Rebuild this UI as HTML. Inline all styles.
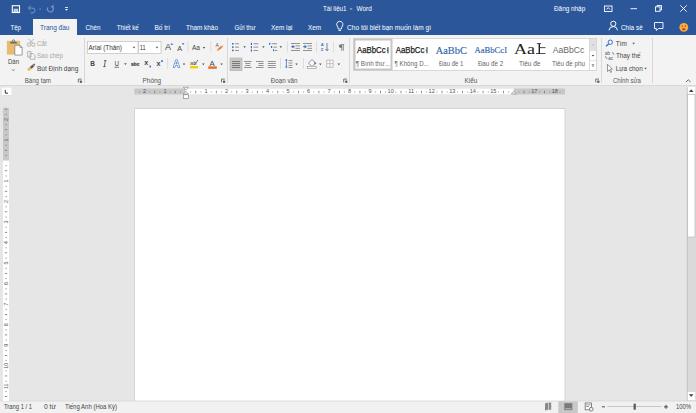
<!DOCTYPE html>
<html><head><meta charset="utf-8">
<style>
*{margin:0;padding:0}
html,body{width:696px;height:413px;overflow:hidden;background:#e6e6e6}
svg{position:absolute;left:0;top:0;font-family:"Liberation Sans",sans-serif}
</style></head><body>
<svg width="696" height="413" viewBox="0 0 696 413">
<rect x="0" y="0" width="696" height="413" fill="#e6e6e6"/>
<rect x="0" y="0" width="696" height="35" fill="#2b579a"/>
<rect x="0" y="35" width="696" height="50" fill="#f3f3f3"/>
<rect x="0" y="85" width="696" height="1" fill="#d8d8d8"/>
<rect x="33" y="19" width="44" height="16.5" fill="#f3f3f3"/>
<rect x="134.5" y="108.5" width="430.5" height="300" fill="#fff" stroke="#d4d4d4" stroke-width="1"/>
<rect x="0" y="401" width="696" height="12" fill="#f1f1f1"/>
<rect x="0" y="400.6" width="696" height="0.8" fill="#d6d6d6"/>
<text x="323" y="10.88" font-size="6.9" fill="#ffffff" font-weight="normal" textLength="23.5" lengthAdjust="spacingAndGlyphs" text-anchor="start">Tài liệu1</text>
<rect x="349.8" y="8.6" width="2.4" height="0.7" fill="#fff"/>
<text x="356.5" y="10.88" font-size="6.9" fill="#ffffff" font-weight="normal" textLength="15.3" lengthAdjust="spacingAndGlyphs" text-anchor="start">Word</text>
<text x="554" y="10.88" font-size="6.9" fill="#ffffff" font-weight="normal" textLength="31.2" lengthAdjust="spacingAndGlyphs" text-anchor="start">Đăng nhập</text>
<text x="10.5" y="29.88" font-size="6.9" fill="#ffffff" font-weight="normal" textLength="10.5" lengthAdjust="spacingAndGlyphs" text-anchor="start">Tệp</text>
<text x="40" y="29.88" font-size="6.9" fill="#2b579a" font-weight="normal" textLength="29.5" lengthAdjust="spacingAndGlyphs" text-anchor="start">Trang đầu</text>
<text x="85.5" y="29.88" font-size="6.9" fill="#ffffff" font-weight="normal" textLength="15" lengthAdjust="spacingAndGlyphs" text-anchor="start">Chèn</text>
<text x="116.8" y="29.88" font-size="6.9" fill="#ffffff" font-weight="normal" textLength="22" lengthAdjust="spacingAndGlyphs" text-anchor="start">Thiết kế</text>
<text x="154.5" y="29.88" font-size="6.9" fill="#ffffff" font-weight="normal" textLength="15.5" lengthAdjust="spacingAndGlyphs" text-anchor="start">Bố trí</text>
<text x="186" y="29.88" font-size="6.9" fill="#ffffff" font-weight="normal" textLength="32" lengthAdjust="spacingAndGlyphs" text-anchor="start">Tham khảo</text>
<text x="234.5" y="29.88" font-size="6.9" fill="#ffffff" font-weight="normal" textLength="21" lengthAdjust="spacingAndGlyphs" text-anchor="start">Gửi thư</text>
<text x="271" y="29.88" font-size="6.9" fill="#ffffff" font-weight="normal" textLength="21.5" lengthAdjust="spacingAndGlyphs" text-anchor="start">Xem lại</text>
<text x="308" y="29.88" font-size="6.9" fill="#ffffff" font-weight="normal" textLength="13" lengthAdjust="spacingAndGlyphs" text-anchor="start">Xem</text>
<text x="347" y="29.88" font-size="6.9" fill="#ffffff" font-weight="normal" textLength="84" lengthAdjust="spacingAndGlyphs" text-anchor="start">Cho tôi biết bạn muốn làm gì</text>
<text x="621" y="29.88" font-size="6.9" fill="#ffffff" font-weight="normal" textLength="21.7" lengthAdjust="spacingAndGlyphs" text-anchor="start">Chia sẻ</text>
<rect x="12.3" y="5.7" width="7.2" height="6.8" fill="none" stroke="#fff" stroke-width="1.1"/>
<rect x="13.6" y="8.8" width="4.6" height="0.9" fill="#fff"/>
<rect x="13.6" y="10.2" width="4.6" height="1.8" fill="#fff"/>
<path d="M14.5 11.6 Q15.2 10.6 15.9 11.2 Q16.6 11.8 17.3 10.8" fill="none" stroke="#2b579a" stroke-width="0.6"/>
<g fill="none" stroke="#7f97c4" stroke-width="1"><path d="M28.5 8 L32 8 Q35 8 35 10.5 Q35 13 32 13 L30.5 13"/><path d="M30.5 5.8 L28.2 8 L30.5 10.2"/></g>
<rect x="39.5" y="8.5" width="1.2" height="1.2" fill="#7f97c4"/>
<g fill="none" stroke="#7f97c4" stroke-width="1.1"><path d="M52.6 7.2 A2.9 2.9 0 1 1 47.8 7.6"/><path d="M50.8 6.6 L52.8 7.3 L53.4 5"/></g>
<rect x="65" y="7" width="3" height="0.8" fill="#fff"/>
<path d="M65 9 L68 9 L66.5 10.8 Z" fill="#fff"/>
<g fill="none" stroke="#fff" stroke-width="0.9"><rect x="604.5" y="6" width="7.5" height="5.5"/><path d="M606.5 9.5 L608.2 7.6 L610 9.5"/><path d="M630.5 8.7 L637 8.7"/><rect x="655.5" y="6.8" width="4.5" height="4.5"/><path d="M657 6.8 V5.5 H661.5 V10 H660"/><path d="M680.3 5.3 L686.7 11.7 M686.7 5.3 L680.3 11.7"/></g>
<g fill="none" stroke="#fff" stroke-width="1"><circle cx="613.3" cy="23.8" r="2.6"/><path d="M609 30.3 Q609.5 26.5 613.3 26.5 Q617 26.5 617.5 30.3"/></g>
<g fill="none" stroke="#fff" stroke-width="0.9"><path d="M654.5 22.5 H663 V28.5 H658.5 L656.3 30.5 V28.5 H654.5 Z"/></g>
<circle cx="683.8" cy="27.3" r="4.4" fill="#f8b03a"/>
<rect x="681.6" y="25.3" width="1.2" height="1.5" fill="#d0402a"/><rect x="684.8" y="25.3" width="1.2" height="1.5" fill="#d0402a"/>
<ellipse cx="683.8" cy="29.3" rx="1.5" ry="1.2" fill="#d0402a"/>
<g fill="none" stroke="#fff" stroke-width="0.9"><path d="M338.3 29 Q338 27 337.2 26 Q336.5 25 336.8 23.5 Q337.5 21.3 339.8 21.3 Q342.1 21.3 342.8 23.5 Q343.1 25 342.4 26 Q341.6 27 341.3 29 Z"/><path d="M338.5 30.5 H341"/></g>
<rect x="84.0" y="38" width="1" height="45" fill="#d8d8d8"/>
<rect x="227.0" y="38" width="1" height="45" fill="#d8d8d8"/>
<rect x="349.0" y="38" width="1" height="45" fill="#d8d8d8"/>
<rect x="601.0" y="38" width="1" height="45" fill="#d8d8d8"/>
<rect x="652.0" y="38" width="1" height="45" fill="#d8d8d8"/>
<path d="M78.3 82.39999999999999 V79.1 H81.6" fill="none" stroke="#666" stroke-width="0.9"/><rect x="79.8" y="80.6" width="2.2" height="2.2" fill="#555"/>
<path d="M221.5 82.39999999999999 V79.1 H224.8" fill="none" stroke="#666" stroke-width="0.9"/><rect x="223" y="80.6" width="2.2" height="2.2" fill="#555"/>
<path d="M343.7 82.39999999999999 V79.1 H347.0" fill="none" stroke="#666" stroke-width="0.9"/><rect x="345.2" y="80.6" width="2.2" height="2.2" fill="#555"/>
<path d="M595.7 82.39999999999999 V79.1 H599.0" fill="none" stroke="#666" stroke-width="0.9"/><rect x="597.2" y="80.6" width="2.2" height="2.2" fill="#555"/>
<text x="24.7" y="83.08" font-size="6.9" fill="#555" font-weight="normal" textLength="26.3" lengthAdjust="spacingAndGlyphs" text-anchor="start">Bảng tạm</text>
<text x="142.5" y="83.08" font-size="6.9" fill="#555" font-weight="normal" textLength="18.7" lengthAdjust="spacingAndGlyphs" text-anchor="start">Phông</text>
<text x="270.7" y="83.08" font-size="6.9" fill="#555" font-weight="normal" textLength="26.8" lengthAdjust="spacingAndGlyphs" text-anchor="start">Đoạn văn</text>
<text x="464.5" y="83.08" font-size="6.9" fill="#555" font-weight="normal" textLength="12.7" lengthAdjust="spacingAndGlyphs" text-anchor="start">Kiểu</text>
<text x="613" y="83.08" font-size="6.9" fill="#555" font-weight="normal" textLength="27.8" lengthAdjust="spacingAndGlyphs" text-anchor="start">Chỉnh sửa</text>
<path d="M686 82 L688.3 79.8 L690.6 82" fill="none" stroke="#555" stroke-width="0.9"/>
<rect x="6.9" y="40.8" width="13.1" height="13.8" fill="#e8bb6e"/>
<path d="M9.9 43.6 L10.6 41.7 H16.4 L17.1 43.6 Z" fill="#6a6a6a"/>
<circle cx="13.5" cy="40.9" r="1.1" fill="#eee" stroke="#6a6a6a" stroke-width="0.9"/>
<path d="M14.8 45.3 H20 L22.1 47.4 V55.1 H14.8 Z" fill="#fff" stroke="#777" stroke-width="0.7"/>
<path d="M20 45.3 V47.4 H22.1" fill="none" stroke="#666" stroke-width="0.6"/>
<text x="8" y="63.88" font-size="6.9" fill="#444444" font-weight="normal" textLength="11" lengthAdjust="spacingAndGlyphs" text-anchor="start">Dán</text>
<path d="M11.8 69.3 L13.2 70.7 L14.6 69.3" fill="none" stroke="#555" stroke-width="0.7"/>
<g fill="none" stroke="#a6a6a6" stroke-width="0.8"><circle cx="29" cy="44.6" r="1.7"/><circle cx="33.3" cy="44.6" r="1.7"/><path d="M29.8 43.1 L33.8 38.8 M32.5 43.1 L28.5 38.8"/></g>
<text x="37" y="45.78" font-size="6.9" fill="#a6a6a6" font-weight="normal" textLength="9.7" lengthAdjust="spacingAndGlyphs" text-anchor="start">Cắt</text>
<g fill="none" stroke="#a6a6a6" stroke-width="0.8"><path d="M27.6 51.6 H31 V57 H27.6 Z"/><path d="M30 53.5 H33 L35 55.5 V59.2 H30 Z"/></g>
<text x="37" y="58.28" font-size="6.9" fill="#a6a6a6" font-weight="normal" textLength="25.8" lengthAdjust="spacingAndGlyphs" text-anchor="start">Sao chép</text>
<path d="M26.9 69.2 L29.8 66.8 L31.8 68.8 L29.2 71.3 Z" fill="#e8b86a"/>
<path d="M29.9 66.9 L32.6 64.6 L34.2 66.3 L31.7 68.7 Z" fill="#5a5a5a"/>
<path d="M33 64.3 L34.4 63.6 L35.1 64.8 L34.3 65.9 Z" fill="#5a5a5a"/>
<text x="37" y="70.78" font-size="6.9" fill="#444444" font-weight="normal" textLength="41.4" lengthAdjust="spacingAndGlyphs" text-anchor="start">Bút Định dạng</text>
<rect x="87.5" y="41.5" width="50.5" height="12" fill="#fff" stroke="#c6c6c6" stroke-width="0.8"/>
<rect x="138.5" y="41.5" width="22.5" height="12" fill="#fff" stroke="#c6c6c6" stroke-width="0.8"/>
<text x="88.6" y="49.78" font-size="6.9" fill="#333" font-weight="normal" textLength="33.4" lengthAdjust="spacingAndGlyphs" text-anchor="start">Arial (Thân)</text>
<path d="M132.7 46.800000000000004 L135.3 46.800000000000004 L134 48.5 Z" fill="#555"/>
<text x="139.7" y="49.78" font-size="6.9" fill="#333" font-weight="normal" textLength="5.8" lengthAdjust="spacingAndGlyphs" text-anchor="start">11</text>
<path d="M155.7 46.800000000000004 L158.3 46.800000000000004 L157 48.5 Z" fill="#555"/>
<text x="165" y="50.27" font-size="9" fill="#444" font-weight="normal" textLength="6" lengthAdjust="spacingAndGlyphs" text-anchor="start">A</text>
<path d="M170.3 44.8 L173.3 44.8 L171.8 43.1 Z" fill="#3b6fc4"/>
<text x="177.3" y="50.58" font-size="7.2" fill="#444" font-weight="normal" textLength="4.8" lengthAdjust="spacingAndGlyphs" text-anchor="start">A</text>
<path d="M181.6 43.3 L184.6 43.3 L183.1 45 Z" fill="#3b6fc4"/>
<rect x="187.5" y="41.5" width="0.8" height="11" fill="#d8d8d8"/>
<text x="192" y="50.18" font-size="7.2" fill="#444" font-weight="normal" textLength="8" lengthAdjust="spacingAndGlyphs" text-anchor="start">Aa</text>
<path d="M202.7 47.0 L205.3 47.0 L204 48.699999999999996 Z" fill="#555"/>
<rect x="210.5" y="41.5" width="0.8" height="11" fill="#d8d8d8"/>
<text x="215.4" y="47.48" font-size="6" fill="#555" font-weight="normal" textLength="3.4" lengthAdjust="spacingAndGlyphs" text-anchor="start">A</text>
<path d="M217.2 50.6 L222.8 45.8" stroke="#f0a860" stroke-width="2"/>
<path d="M219 49 L221.2 47.2" stroke="#e4682a" stroke-width="1.3"/>
<text x="90.3" y="65.84" font-size="6.8" fill="#444" font-weight="bold" textLength="4.7" lengthAdjust="spacingAndGlyphs" text-anchor="start">B</text>
<path d="M103.2 66.6 H105.6 M104.1 60.6 H106.5 M105.3 60.6 L104.4 66.6" fill="none" stroke="#555" stroke-width="0.9"/>
<text x="114.5" y="65.54" font-size="6.8" fill="#444" font-weight="normal" textLength="4.5" lengthAdjust="spacingAndGlyphs" text-anchor="start">U</text>
<rect x="114.5" y="66.8" width="4.5" height="0.7" fill="#444"/>
<path d="M124.10000000000001 63.2 L126.7 63.2 L125.4 64.9 Z" fill="#555"/>
<text x="131" y="65.71" font-size="5.8" fill="#444" font-weight="bold" textLength="8.5" lengthAdjust="spacingAndGlyphs" text-anchor="start">abc</text>
<path d="M131 64 L139.5 64" stroke="#444" stroke-width="0.6"/>
<text x="144.3" y="65.48" font-size="6.6" fill="#444" font-weight="bold" textLength="4" lengthAdjust="spacingAndGlyphs" text-anchor="start">x</text>
<rect x="149.5" y="65.5" width="1.5" height="2" fill="#3b6fc4"/>
<text x="156.4" y="65.98" font-size="6.6" fill="#444" font-weight="bold" textLength="4" lengthAdjust="spacingAndGlyphs" text-anchor="start">x</text>
<rect x="161.3" y="60" width="1.5" height="2" fill="#3b6fc4"/>
<rect x="167.3" y="58" width="0.8" height="11" fill="#d8d8d8"/>
<path d="M173.2 67.6 L175.7 59.8 H177.3 L179.8 67.6 H178.1 L177.5 65.5 H175.5 L174.9 67.6 Z M175.9 64 H177.1 L176.5 61.8 Z" fill="#fff" stroke="#4a7acb" stroke-width="0.7"/>
<path d="M182.7 63.60000000000001 L185.3 63.60000000000001 L184 65.30000000000001 Z" fill="#555"/>
<text x="190" y="65.28" font-size="6" fill="#555" font-weight="normal" textLength="6.5" lengthAdjust="spacingAndGlyphs" text-anchor="start">ab</text>
<path d="M194 65 L198 60" stroke="#555" stroke-width="0.9"/>
<rect x="190" y="66" width="8.2" height="2.4" fill="#f2d000"/>
<path d="M202.0 63.60000000000001 L204.60000000000002 63.60000000000001 L203.3 65.30000000000001 Z" fill="#555"/>
<text x="209.6" y="65.91" font-size="7" fill="#444" font-weight="normal" textLength="5.2" lengthAdjust="spacingAndGlyphs" text-anchor="start">A</text>
<rect x="208.2" y="66.4" width="8.6" height="2.4" fill="#e0702a"/>
<path d="M220.29999999999998 63.60000000000001 L222.9 63.60000000000001 L221.6 65.30000000000001 Z" fill="#555"/>
<rect x="232" y="43" width="1.6" height="1.6" fill="#3b6fc4"/>
<rect x="232" y="46.3" width="1.6" height="1.6" fill="#3b6fc4"/>
<rect x="232" y="49.6" width="1.6" height="1.6" fill="#3b6fc4"/>
<rect x="235" y="43.4" width="4" height="0.8" fill="#7a7a7a"/>
<rect x="235" y="46.7" width="4" height="0.8" fill="#7a7a7a"/>
<rect x="235" y="50" width="4" height="0.8" fill="#7a7a7a"/>
<path d="M243.29999999999998 46.2 L245.9 46.2 L244.6 47.9 Z" fill="#555"/>
<rect x="250.8" y="42.8" width="1.2" height="2.2" fill="#3b6fc4"/>
<rect x="250.8" y="46.1" width="1.2" height="2.2" fill="#3b6fc4"/>
<rect x="250.8" y="49.4" width="1.2" height="2.2" fill="#3b6fc4"/>
<rect x="253.5" y="43.4" width="4.7" height="0.8" fill="#7a7a7a"/>
<rect x="253.5" y="46.7" width="4.7" height="0.8" fill="#7a7a7a"/>
<rect x="253.5" y="50" width="4.7" height="0.8" fill="#7a7a7a"/>
<path d="M262.09999999999997 46.2 L264.7 46.2 L263.4 47.9 Z" fill="#555"/>
<rect x="269" y="42.8" width="1.2" height="2" fill="#3b6fc4"/>
<rect x="271" y="46" width="1.2" height="2" fill="#3b6fc4"/>
<rect x="273" y="49.2" width="1.2" height="2" fill="#3b6fc4"/>
<rect x="271.5" y="43.4" width="5.5" height="0.8" fill="#7a7a7a"/>
<rect x="273.5" y="46.7" width="3.5" height="0.8" fill="#7a7a7a"/>
<rect x="275" y="50" width="2.3" height="0.8" fill="#7a7a7a"/>
<path d="M279.5 46.2 L282.1 46.2 L280.8 47.9 Z" fill="#555"/>
<rect x="287" y="41.5" width="0.8" height="11" fill="#d8d8d8"/>
<rect x="291" y="43.2" width="9" height="0.8" fill="#7a7a7a"/>
<rect x="291" y="50.2" width="9" height="0.8" fill="#7a7a7a"/>
<rect x="295.5" y="45.5" width="4.5" height="0.8" fill="#7a7a7a"/>
<rect x="295.5" y="47.9" width="4.5" height="0.8" fill="#7a7a7a"/>
<path d="M291 46.7 L293.5 44.8 V48.6 Z" fill="#3b6fc4"/><rect x="292.5" y="46.3" width="2.5" height="0.9" fill="#3b6fc4"/>
<rect x="303" y="43.2" width="9" height="0.8" fill="#7a7a7a"/>
<rect x="303" y="50.2" width="9" height="0.8" fill="#7a7a7a"/>
<rect x="307.5" y="45.5" width="4.5" height="0.8" fill="#7a7a7a"/>
<rect x="307.5" y="47.9" width="4.5" height="0.8" fill="#7a7a7a"/>
<path d="M307 46.7 L304.5 44.8 V48.6 Z" fill="#3b6fc4"/><rect x="303" y="46.3" width="2.5" height="0.9" fill="#3b6fc4"/>
<rect x="316.2" y="41.5" width="0.8" height="11" fill="#d8d8d8"/>
<text x="320.7" y="46.39" font-size="4.2" fill="#3b6fc4" font-weight="bold" text-anchor="start">A</text>
<text x="320.7" y="50.99" font-size="4.2" fill="#3b6fc4" font-weight="bold" text-anchor="start">Z</text>
<path d="M327 43 V50.5 M325.5 49 L327 50.8 L328.5 49" fill="none" stroke="#666" stroke-width="0.8"/>
<rect x="333" y="41.5" width="0.8" height="11" fill="#d8d8d8"/>
<path d="M341.3 44.2 H344.2 V45 H343.7 V50.8 H342.9 V45 H342.2 V50.8 H341.4 V48 Q338.8 48 338.8 46.1 Q338.8 44.2 341.3 44.2 Z" fill="#777"/>
<rect x="230" y="58" width="12" height="12.7" fill="#c8c8c8" stroke="#b0b0b0" stroke-width="0.6"/>
<rect x="232" y="61" width="8" height="0.8" fill="#666"/>
<rect x="232" y="63" width="8" height="0.8" fill="#666"/>
<rect x="232" y="65" width="8" height="0.8" fill="#666"/>
<rect x="232" y="67" width="8" height="0.8" fill="#666"/>
<rect x="244" y="61" width="7.6" height="0.8" fill="#7a7a7a"/>
<rect x="244" y="67" width="7.6" height="0.8" fill="#7a7a7a"/>
<rect x="245.2" y="63" width="5.2" height="0.8" fill="#7a7a7a"/>
<rect x="245.2" y="65" width="5.2" height="0.8" fill="#7a7a7a"/>
<rect x="256" y="61" width="7.6" height="0.8" fill="#7a7a7a"/>
<rect x="256" y="67" width="7.6" height="0.8" fill="#7a7a7a"/>
<rect x="258.4" y="63" width="5.2" height="0.8" fill="#7a7a7a"/>
<rect x="258.4" y="65" width="5.2" height="0.8" fill="#7a7a7a"/>
<rect x="267.8" y="61" width="8" height="0.8" fill="#7a7a7a"/>
<rect x="267.8" y="63" width="8" height="0.8" fill="#7a7a7a"/>
<rect x="267.8" y="65" width="8" height="0.8" fill="#7a7a7a"/>
<rect x="267.8" y="67" width="8" height="0.8" fill="#7a7a7a"/>
<rect x="280" y="58" width="0.8" height="11" fill="#d8d8d8"/>
<path d="M285 60.5 L286.3 58.8 L287.6 60.5 Z M285 66.5 L286.3 68.2 L287.6 66.5 Z" fill="#3b6fc4"/>
<rect x="285.9" y="60" width="0.8" height="7" fill="#3b6fc4"/>
<rect x="288.5" y="60.3" width="4" height="0.8" fill="#7a7a7a"/>
<rect x="288.5" y="62.6" width="4" height="0.8" fill="#7a7a7a"/>
<rect x="288.5" y="64.9" width="4" height="0.8" fill="#7a7a7a"/>
<rect x="288.5" y="67.2" width="4" height="0.8" fill="#7a7a7a"/>
<path d="M295.3 63.60000000000001 L297.90000000000003 63.60000000000001 L296.6 65.30000000000001 Z" fill="#555"/>
<rect x="303" y="58" width="0.8" height="11" fill="#d8d8d8"/>
<path d="M308.5 63 L312 59.5 L315.5 63 L312 66.5 Z" fill="#fff" stroke="#666" stroke-width="0.7"/>
<path d="M314.5 61.5 L316.3 63.3 L314.5 65" fill="#3b6fc4"/>
<rect x="307.3" y="66.3" width="8.8" height="2.2" fill="#fff" stroke="#777" stroke-width="0.5"/>
<path d="M319.09999999999997 63.60000000000001 L321.7 63.60000000000001 L320.4 65.30000000000001 Z" fill="#555"/>
<g fill="#fff" stroke="#bdbdbd" stroke-width="1"><rect x="326.7" y="60.2" width="6.4" height="7"/><path d="M329.9 60.2 V67.2 M326.7 63.7 H333.1"/></g>
<path d="M337.5 63.60000000000001 L340.1 63.60000000000001 L338.8 65.30000000000001 Z" fill="#555"/>
<rect x="353.5" y="38.5" width="243" height="32" fill="#fff" stroke="#d0d0d0" stroke-width="0.8"/>
<rect x="354.5" y="39.5" width="37" height="30" fill="#fff" stroke="#c6c6c6" stroke-width="2"/>
<clipPath id="c1"><rect x="350" y="40" width="38.9" height="20"/></clipPath><clipPath id="c2"><rect x="392" y="40" width="35.9" height="20"/></clipPath>
<g clip-path="url(#c1)">
<text x="357" y="53.30" font-size="8.8" fill="#222" font-weight="normal" textLength="28.6" lengthAdjust="spacingAndGlyphs" stroke="#222" stroke-width="0.25" text-anchor="start">AaBbCc</text>
<rect x="387.4" y="47.1" width="1.1" height="6.2" fill="#333"/><rect x="386.6" y="49.9" width="1" height="0.7" fill="#333"/>
</g>
<text x="355.7" y="66.01" font-size="6.7" fill="#666" font-weight="normal" textLength="34.3" lengthAdjust="spacingAndGlyphs" text-anchor="start">¶ Bình thư...</text>
<g clip-path="url(#c2)">
<text x="395.8" y="53.30" font-size="8.8" fill="#222" font-weight="normal" textLength="28.6" lengthAdjust="spacingAndGlyphs" stroke="#222" stroke-width="0.25" text-anchor="start">AaBbCc</text>
<rect x="426.4" y="47.1" width="1.1" height="6.2" fill="#333"/><rect x="425.6" y="49.9" width="1" height="0.7" fill="#333"/>
</g>
<text x="394.5" y="66.01" font-size="6.7" fill="#666" font-weight="normal" textLength="34.3" lengthAdjust="spacingAndGlyphs" text-anchor="start">¶ Không D...</text>
<text x="435.8" y="53.50" font-size="11.2" fill="#2b66ad" font-weight="normal" font-family='Liberation Serif' textLength="31" lengthAdjust="spacingAndGlyphs" stroke="#2b66ad" stroke-width="0.15" text-anchor="start">AaBbC</text>
<text x="439" y="66.21" font-size="6.7" fill="#666" font-weight="normal" textLength="24.4" lengthAdjust="spacingAndGlyphs" text-anchor="start">Đầu đề 1</text>
<text x="474.6" y="53.10" font-size="8.8" fill="#2b66ad" font-weight="normal" font-family='Liberation Serif' textLength="32.4" lengthAdjust="spacingAndGlyphs" stroke="#2b66ad" stroke-width="0.15" text-anchor="start">AaBbCcI</text>
<text x="477.9" y="66.21" font-size="6.7" fill="#666" font-weight="normal" textLength="25.2" lengthAdjust="spacingAndGlyphs" text-anchor="start">Đầu đề 2</text>
<text x="513.9" y="54.42" font-size="14.6" fill="#222" font-weight="normal" font-family='Liberation Serif' textLength="21" lengthAdjust="spacingAndGlyphs" text-anchor="start">Aa</text>
<g fill="#222"><rect x="538.6" y="43.5" width="1.4" height="10.3"/><rect x="536.8" y="43.3" width="4.2" height="0.8"/><rect x="536" y="53.1" width="9.5" height="0.8"/><rect x="540" y="47.3" width="5.5" height="0.8"/></g>
<text x="519" y="66.41" font-size="6.7" fill="#666" font-weight="normal" textLength="21.5" lengthAdjust="spacingAndGlyphs" text-anchor="start">Tiêu đề</text>
<text x="552.7" y="53.14" font-size="8.6" fill="#6a6a6a" font-weight="normal" textLength="31.6" lengthAdjust="spacingAndGlyphs" text-anchor="start">AaBbCc</text>
<text x="552" y="66.41" font-size="6.7" fill="#666" font-weight="normal" textLength="33" lengthAdjust="spacingAndGlyphs" text-anchor="start">Tiêu đề phụ</text>
<rect x="589.5" y="38.5" width="7" height="32" fill="#fff" stroke="#d0d0d0" stroke-width="0.8"/>
<rect x="590" y="39" width="6" height="11.3" fill="#e0e0e0"/>
<path d="M591.8 45.3 L593 44 L594.2 45.3 Z" fill="#aaa"/>
<rect x="589.5" y="50.5" width="7" height="0.6" fill="#d0d0d0"/>
<path d="M591.7 55 L594.3 55 L593 56.5 Z" fill="#444"/>
<rect x="589.5" y="60.5" width="7" height="0.6" fill="#d0d0d0"/>
<rect x="591.7" y="64" width="2.6" height="0.6" fill="#666"/>
<path d="M591.7 65.5 L594.3 65.5 L593 67 Z" fill="#666"/>
<g fill="none" stroke="#3b6fc4" stroke-width="1"><circle cx="610.3" cy="42.2" r="2.2"/><path d="M608.8 43.8 L606 46.3" stroke-width="1.4"/></g>
<text x="615.8" y="45.58" font-size="6.9" fill="#444444" font-weight="normal" textLength="11.1" lengthAdjust="spacingAndGlyphs" text-anchor="start">Tìm</text>
<path d="M632.3000000000001 42.7 L634.9 42.7 L633.6 44.4 Z" fill="#555"/>
<text x="605" y="55.32" font-size="4.6" fill="#555" font-weight="normal" text-anchor="start">ab</text>
<text x="608.3" y="60.12" font-size="4.6" fill="#555" font-weight="normal" text-anchor="start">ac</text>
<path d="M605.5 56 Q605.5 58.5 607.5 58.5 M612 52.5 Q613.8 52.5 613.8 54.8" fill="none" stroke="#3b6fc4" stroke-width="0.7"/>
<text x="616" y="58.08" font-size="6.9" fill="#444444" font-weight="normal" textLength="24.5" lengthAdjust="spacingAndGlyphs" text-anchor="start">Thay thế</text>
<path d="M607.5 64.2 V71.5 L609.2 69.8 L610.6 72.5 L611.6 72 L610.3 69.3 L612.4 69.2 Z" fill="#fff" stroke="#555" stroke-width="0.6"/>
<text x="615.8" y="70.78" font-size="6.9" fill="#444444" font-weight="normal" textLength="26.9" lengthAdjust="spacingAndGlyphs" text-anchor="start">Lựa chọn</text>
<path d="M644.3000000000001 67.7 L646.9 67.7 L645.6 69.4 Z" fill="#555"/>
<rect x="134.3" y="88.5" width="430.7" height="6" fill="#c8c8c8"/>
<rect x="185.5" y="88.5" width="328.29999999999995" height="6" fill="#fff"/>
<rect x="138.93" y="91.5" width="0.9" height="1" fill="#888"/>
<text x="144.46" y="93.15" font-size="5.6" fill="#555" font-weight="normal" text-anchor="middle">2</text>
<rect x="149.19" y="91.5" width="0.9" height="1" fill="#888"/>
<rect x="154.32" y="90.7" width="0.8" height="2.6" fill="#777"/>
<rect x="159.45" y="91.5" width="0.9" height="1" fill="#888"/>
<text x="164.98" y="93.15" font-size="5.6" fill="#555" font-weight="normal" text-anchor="middle">1</text>
<rect x="169.71" y="91.5" width="0.9" height="1" fill="#888"/>
<rect x="174.84" y="90.7" width="0.8" height="2.6" fill="#777"/>
<rect x="179.97" y="91.5" width="0.9" height="1" fill="#888"/>
<rect x="190.23" y="91.5" width="0.9" height="1" fill="#888"/>
<rect x="195.36" y="90.7" width="0.8" height="2.6" fill="#777"/>
<rect x="200.49" y="91.5" width="0.9" height="1" fill="#888"/>
<text x="206.02" y="93.15" font-size="5.6" fill="#555" font-weight="normal" text-anchor="middle">1</text>
<rect x="210.75" y="91.5" width="0.9" height="1" fill="#888"/>
<rect x="215.88" y="90.7" width="0.8" height="2.6" fill="#777"/>
<rect x="221.01" y="91.5" width="0.9" height="1" fill="#888"/>
<text x="226.54" y="93.15" font-size="5.6" fill="#555" font-weight="normal" text-anchor="middle">2</text>
<rect x="231.27" y="91.5" width="0.9" height="1" fill="#888"/>
<rect x="236.40" y="90.7" width="0.8" height="2.6" fill="#777"/>
<rect x="241.53" y="91.5" width="0.9" height="1" fill="#888"/>
<text x="247.06" y="93.15" font-size="5.6" fill="#555" font-weight="normal" text-anchor="middle">3</text>
<rect x="251.79" y="91.5" width="0.9" height="1" fill="#888"/>
<rect x="256.92" y="90.7" width="0.8" height="2.6" fill="#777"/>
<rect x="262.05" y="91.5" width="0.9" height="1" fill="#888"/>
<text x="267.58" y="93.15" font-size="5.6" fill="#555" font-weight="normal" text-anchor="middle">4</text>
<rect x="272.31" y="91.5" width="0.9" height="1" fill="#888"/>
<rect x="277.44" y="90.7" width="0.8" height="2.6" fill="#777"/>
<rect x="282.57" y="91.5" width="0.9" height="1" fill="#888"/>
<text x="288.1" y="93.15" font-size="5.6" fill="#555" font-weight="normal" text-anchor="middle">5</text>
<rect x="292.83" y="91.5" width="0.9" height="1" fill="#888"/>
<rect x="297.96" y="90.7" width="0.8" height="2.6" fill="#777"/>
<rect x="303.09" y="91.5" width="0.9" height="1" fill="#888"/>
<text x="308.62" y="93.15" font-size="5.6" fill="#555" font-weight="normal" text-anchor="middle">6</text>
<rect x="313.35" y="91.5" width="0.9" height="1" fill="#888"/>
<rect x="318.48" y="90.7" width="0.8" height="2.6" fill="#777"/>
<rect x="323.61" y="91.5" width="0.9" height="1" fill="#888"/>
<text x="329.14" y="93.15" font-size="5.6" fill="#555" font-weight="normal" text-anchor="middle">7</text>
<rect x="333.87" y="91.5" width="0.9" height="1" fill="#888"/>
<rect x="339.00" y="90.7" width="0.8" height="2.6" fill="#777"/>
<rect x="344.13" y="91.5" width="0.9" height="1" fill="#888"/>
<text x="349.65999999999997" y="93.15" font-size="5.6" fill="#555" font-weight="normal" text-anchor="middle">8</text>
<rect x="354.39" y="91.5" width="0.9" height="1" fill="#888"/>
<rect x="359.52" y="90.7" width="0.8" height="2.6" fill="#777"/>
<rect x="364.65" y="91.5" width="0.9" height="1" fill="#888"/>
<text x="370.18" y="93.15" font-size="5.6" fill="#555" font-weight="normal" text-anchor="middle">9</text>
<rect x="374.91" y="91.5" width="0.9" height="1" fill="#888"/>
<rect x="380.04" y="90.7" width="0.8" height="2.6" fill="#777"/>
<rect x="385.17" y="91.5" width="0.9" height="1" fill="#888"/>
<text x="390.7" y="93.15" font-size="5.6" fill="#555" font-weight="normal" text-anchor="middle">10</text>
<rect x="395.43" y="91.5" width="0.9" height="1" fill="#888"/>
<rect x="400.56" y="90.7" width="0.8" height="2.6" fill="#777"/>
<rect x="405.69" y="91.5" width="0.9" height="1" fill="#888"/>
<text x="411.22" y="93.15" font-size="5.6" fill="#555" font-weight="normal" text-anchor="middle">11</text>
<rect x="415.95" y="91.5" width="0.9" height="1" fill="#888"/>
<rect x="421.08" y="90.7" width="0.8" height="2.6" fill="#777"/>
<rect x="426.21" y="91.5" width="0.9" height="1" fill="#888"/>
<text x="431.74" y="93.15" font-size="5.6" fill="#555" font-weight="normal" text-anchor="middle">12</text>
<rect x="436.47" y="91.5" width="0.9" height="1" fill="#888"/>
<rect x="441.60" y="90.7" width="0.8" height="2.6" fill="#777"/>
<rect x="446.73" y="91.5" width="0.9" height="1" fill="#888"/>
<text x="452.26" y="93.15" font-size="5.6" fill="#555" font-weight="normal" text-anchor="middle">13</text>
<rect x="456.99" y="91.5" width="0.9" height="1" fill="#888"/>
<rect x="462.12" y="90.7" width="0.8" height="2.6" fill="#777"/>
<rect x="467.25" y="91.5" width="0.9" height="1" fill="#888"/>
<text x="472.78" y="93.15" font-size="5.6" fill="#555" font-weight="normal" text-anchor="middle">14</text>
<rect x="477.51" y="91.5" width="0.9" height="1" fill="#888"/>
<rect x="482.64" y="90.7" width="0.8" height="2.6" fill="#777"/>
<rect x="487.77" y="91.5" width="0.9" height="1" fill="#888"/>
<text x="493.3" y="93.15" font-size="5.6" fill="#555" font-weight="normal" text-anchor="middle">15</text>
<rect x="498.03" y="91.5" width="0.9" height="1" fill="#888"/>
<rect x="503.16" y="90.7" width="0.8" height="2.6" fill="#777"/>
<rect x="508.29" y="91.5" width="0.9" height="1" fill="#888"/>
<rect x="518.55" y="91.5" width="0.9" height="1" fill="#888"/>
<rect x="523.68" y="90.7" width="0.8" height="2.6" fill="#777"/>
<rect x="528.81" y="91.5" width="0.9" height="1" fill="#888"/>
<text x="534.3399999999999" y="93.15" font-size="5.6" fill="#555" font-weight="normal" text-anchor="middle">17</text>
<rect x="539.07" y="91.5" width="0.9" height="1" fill="#888"/>
<rect x="544.20" y="90.7" width="0.8" height="2.6" fill="#777"/>
<rect x="549.33" y="91.5" width="0.9" height="1" fill="#888"/>
<text x="554.86" y="93.15" font-size="5.6" fill="#555" font-weight="normal" text-anchor="middle">18</text>
<rect x="559.59" y="91.5" width="0.9" height="1" fill="#888"/>
<path d="M183.3 87.3 H188.3 L185.8 90 Z" fill="#fff" stroke="#777" stroke-width="0.6"/>
<path d="M185.8 91.3 L188.3 94 H183.3 Z" fill="#fff" stroke="#777" stroke-width="0.6"/>
<rect x="183.3" y="94.8" width="5" height="3.6" fill="#fff" stroke="#777" stroke-width="0.6"/>
<path d="M513.8 91.3 L516.3 94 H511.29999999999995 Z" fill="#fff" stroke="#777" stroke-width="0.6"/>
<rect x="1.8" y="87.6" width="9.6" height="8" fill="#fff"/><rect x="1.8" y="95.4" width="9.6" height="0.5" fill="#c8c8c8"/>
<path d="M5.3 89.9 V93.2 H8" fill="none" stroke="#333" stroke-width="1"/>
<rect x="3" y="107.5" width="6" height="293.5" fill="#fff"/>
<rect x="3" y="107.5" width="6" height="53.0" fill="#c8c8c8"/>
<rect x="4.8" y="108.80" width="2.4" height="0.8" fill="#777"/>
<rect x="5.6" y="113.93" width="1" height="1" fill="#777"/>
<text transform="translate(6.1 119.46) rotate(-90)" x="0" y="1.7" font-size="5.4" fill="#555" text-anchor="middle">2</text>
<rect x="5.6" y="124.19" width="1" height="1" fill="#777"/>
<rect x="4.8" y="129.32" width="2.4" height="0.8" fill="#777"/>
<rect x="5.6" y="134.45" width="1" height="1" fill="#777"/>
<text transform="translate(6.1 139.98) rotate(-90)" x="0" y="1.7" font-size="5.4" fill="#555" text-anchor="middle">1</text>
<rect x="5.6" y="144.71" width="1" height="1" fill="#777"/>
<rect x="4.8" y="149.84" width="2.4" height="0.8" fill="#777"/>
<rect x="5.6" y="154.97" width="1" height="1" fill="#777"/>
<rect x="5.6" y="165.23" width="1" height="1" fill="#777"/>
<rect x="4.8" y="170.36" width="2.4" height="0.8" fill="#777"/>
<rect x="5.6" y="175.49" width="1" height="1" fill="#777"/>
<text transform="translate(6.1 181.02) rotate(-90)" x="0" y="1.7" font-size="5.4" fill="#555" text-anchor="middle">1</text>
<rect x="5.6" y="185.75" width="1" height="1" fill="#777"/>
<rect x="4.8" y="190.88" width="2.4" height="0.8" fill="#777"/>
<rect x="5.6" y="196.01" width="1" height="1" fill="#777"/>
<text transform="translate(6.1 201.54) rotate(-90)" x="0" y="1.7" font-size="5.4" fill="#555" text-anchor="middle">2</text>
<rect x="5.6" y="206.27" width="1" height="1" fill="#777"/>
<rect x="4.8" y="211.40" width="2.4" height="0.8" fill="#777"/>
<rect x="5.6" y="216.53" width="1" height="1" fill="#777"/>
<text transform="translate(6.1 222.06) rotate(-90)" x="0" y="1.7" font-size="5.4" fill="#555" text-anchor="middle">3</text>
<rect x="5.6" y="226.79" width="1" height="1" fill="#777"/>
<rect x="4.8" y="231.92" width="2.4" height="0.8" fill="#777"/>
<rect x="5.6" y="237.05" width="1" height="1" fill="#777"/>
<text transform="translate(6.1 242.58) rotate(-90)" x="0" y="1.7" font-size="5.4" fill="#555" text-anchor="middle">4</text>
<rect x="5.6" y="247.31" width="1" height="1" fill="#777"/>
<rect x="4.8" y="252.44" width="2.4" height="0.8" fill="#777"/>
<rect x="5.6" y="257.57" width="1" height="1" fill="#777"/>
<text transform="translate(6.1 263.10) rotate(-90)" x="0" y="1.7" font-size="5.4" fill="#555" text-anchor="middle">5</text>
<rect x="5.6" y="267.83" width="1" height="1" fill="#777"/>
<rect x="4.8" y="272.96" width="2.4" height="0.8" fill="#777"/>
<rect x="5.6" y="278.09" width="1" height="1" fill="#777"/>
<text transform="translate(6.1 283.62) rotate(-90)" x="0" y="1.7" font-size="5.4" fill="#555" text-anchor="middle">6</text>
<rect x="5.6" y="288.35" width="1" height="1" fill="#777"/>
<rect x="4.8" y="293.48" width="2.4" height="0.8" fill="#777"/>
<rect x="5.6" y="298.61" width="1" height="1" fill="#777"/>
<text transform="translate(6.1 304.14) rotate(-90)" x="0" y="1.7" font-size="5.4" fill="#555" text-anchor="middle">7</text>
<rect x="5.6" y="308.87" width="1" height="1" fill="#777"/>
<rect x="4.8" y="314.00" width="2.4" height="0.8" fill="#777"/>
<rect x="5.6" y="319.13" width="1" height="1" fill="#777"/>
<text transform="translate(6.1 324.66) rotate(-90)" x="0" y="1.7" font-size="5.4" fill="#555" text-anchor="middle">8</text>
<rect x="5.6" y="329.39" width="1" height="1" fill="#777"/>
<rect x="4.8" y="334.52" width="2.4" height="0.8" fill="#777"/>
<rect x="5.6" y="339.65" width="1" height="1" fill="#777"/>
<text transform="translate(6.1 345.18) rotate(-90)" x="0" y="1.7" font-size="5.4" fill="#555" text-anchor="middle">9</text>
<rect x="5.6" y="349.91" width="1" height="1" fill="#777"/>
<rect x="4.8" y="355.04" width="2.4" height="0.8" fill="#777"/>
<rect x="5.6" y="360.17" width="1" height="1" fill="#777"/>
<text transform="translate(6.1 365.70) rotate(-90)" x="0" y="1.7" font-size="5.4" fill="#555" text-anchor="middle">10</text>
<rect x="5.6" y="370.43" width="1" height="1" fill="#777"/>
<rect x="4.8" y="375.56" width="2.4" height="0.8" fill="#777"/>
<rect x="5.6" y="380.69" width="1" height="1" fill="#777"/>
<text transform="translate(6.1 386.22) rotate(-90)" x="0" y="1.7" font-size="5.4" fill="#555" text-anchor="middle">11</text>
<rect x="5.6" y="390.95" width="1" height="1" fill="#777"/>
<rect x="4.8" y="396.08" width="2.4" height="0.8" fill="#777"/>
<rect x="687" y="87" width="9" height="314" fill="#dadada"/>
<rect x="687.2" y="87" width="8" height="7" fill="#fff"/>
<path d="M688.9 92 L691.2 89.3 L693.5 92 Z" fill="#444"/>
<rect x="687.5" y="94.5" width="7.5" height="142.5" fill="#fff" stroke="#c0c0c0" stroke-width="0.8"/>
<rect x="687.2" y="392" width="8" height="8" fill="#fff"/>
<path d="M688.9 394.2 L693.5 394.2 L691.2 396.9 Z" fill="#444"/>
<rect x="686.8" y="87" width="0.8" height="314" fill="#bdbdbd"/>
<text x="4" y="409.14" font-size="6.5" fill="#444" font-weight="normal" textLength="28" lengthAdjust="spacingAndGlyphs" text-anchor="start">Trang 1 / 1</text>
<text x="44" y="409.14" font-size="6.5" fill="#444" font-weight="normal" textLength="12" lengthAdjust="spacingAndGlyphs" text-anchor="start">0 từ</text>
<text x="65" y="409.14" font-size="6.5" fill="#444" font-weight="normal" textLength="52" lengthAdjust="spacingAndGlyphs" text-anchor="start">Tiếng Anh (Hoa Kỳ)</text>
<text x="676" y="409.14" font-size="6.5" fill="#444" font-weight="normal" textLength="15" lengthAdjust="spacingAndGlyphs" text-anchor="start">100%</text>
<path d="M545 403.5 L548 402.6 V409.8 L545 410.5 Z M548.6 402.6 H551.2 V409.8 H548.6 Z" fill="#8a8a8a"/>
<rect x="558.3" y="401.3" width="19.5" height="11.7" fill="#c8c8c8"/>
<rect x="564.3" y="403.2" width="8" height="7" fill="#7a7a7a"/>
<rect x="565.3" y="408" width="6" height="1.4" fill="#aaa"/>
<rect x="585.2" y="403" width="6.3" height="6.8" fill="#fff" stroke="#7a7a7a" stroke-width="0.9"/><rect x="586" y="404.5" width="4.6" height="0.8" fill="#888"/><rect x="586" y="406.2" width="3" height="0.8" fill="#888"/>
<circle cx="591.2" cy="409.2" r="1.9" fill="#eee" stroke="#666" stroke-width="0.8"/>
<rect x="601.8" y="406.3" width="3.2" height="1" fill="#555"/>
<rect x="607.5" y="406.4" width="54" height="0.6" fill="#aaa"/>
<rect x="633.6" y="403.7" width="2.2" height="6" fill="#555"/>
<rect x="664" y="406.3" width="4" height="1.1" fill="#555"/><rect x="665.45" y="404.8" width="1.1" height="4" fill="#555"/>
</svg></body></html>
